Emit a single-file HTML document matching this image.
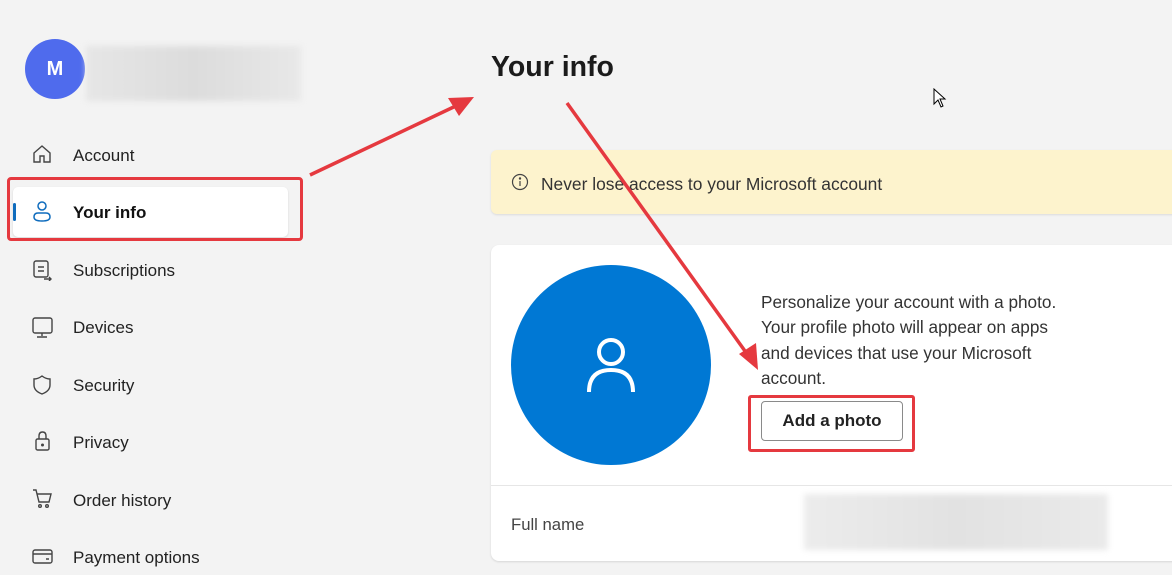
<!DOCTYPE html>
<html><head><style>
body{margin:0;width:1172px;height:575px;background:#f3f3f3;font-family:"Liberation Sans",sans-serif;color:#1b1b1b;position:relative;overflow:hidden}
.abs{position:absolute}
.nav{position:absolute;left:73px;font-size:17px;color:#222}
.ic{position:absolute;left:31px}
</style></head><body>
<div class="abs" style="left:25px;top:39px;width:60px;height:60px;border-radius:50%;background:#4f6bed;color:#fff;font-size:20px;font-weight:bold;text-align:center;line-height:60px">M</div>
<div class="abs" style="left:86px;top:46px;width:215px;height:55px;background:linear-gradient(90deg,#e6e6e6,#dcdcdc 50%,#e8e8e8);filter:blur(3px)"></div>

<div class="abs" style="left:13px;top:187px;width:275px;height:50px;background:#fff;border-radius:5px;box-shadow:0 1px 2px rgba(0,0,0,.12)"></div>
<div class="abs" style="left:13px;top:203px;width:3px;height:18px;background:#0f6cbd;border-radius:2px"></div>
<div class="abs" style="left:7px;top:177px;width:290px;height:58px;border:3px solid #e5393f;border-radius:4px"></div>

<svg class="ic" style="top:143px" width="22" height="22" viewBox="0 0 22 22" fill="none" stroke="#444" stroke-width="1.4"><path d="M3 10 L11 3 L19 10 V19 H13 V13 H9 V19 H3 Z"/></svg>
<div class="nav" style="top:146px">Account</div>
<svg class="ic" style="top:199px" width="22" height="24" viewBox="0 0 22 24" fill="none" stroke="#0f6cbd" stroke-width="1.5"><circle cx="11" cy="7" r="4"/><path d="M3 18 Q3 14 7 14 H15 Q19 14 19 18 Q19 22 11 22 Q3 22 3 18Z"/></svg>
<div class="nav" style="top:203px;font-weight:bold;color:#111">Your info</div>
<svg class="ic" style="top:259px" width="22" height="22" viewBox="0 0 22 22" fill="none" stroke="#444" stroke-width="1.4"><rect x="3" y="2" width="14" height="16" rx="2"/><path d="M7 8H13M7 12H13M13 20H20M18 18L20 20L18 22"/></svg>
<div class="nav" style="top:261px">Subscriptions</div>
<svg class="ic" style="top:316px" width="22" height="22" viewBox="0 0 22 22" fill="none" stroke="#444" stroke-width="1.4"><rect x="2" y="2" width="19" height="15" rx="2"/><path d="M11 17V20M6 21H16"/></svg>
<div class="nav" style="top:318px">Devices</div>
<svg class="ic" style="top:374px" width="22" height="22" viewBox="0 0 22 22" fill="none" stroke="#444" stroke-width="1.4"><path d="M11 2 Q15 5 19 5 V11 Q19 17 11 20 Q3 17 3 11 V5 Q7 5 11 2Z"/></svg>
<div class="nav" style="top:376px">Security</div>
<svg class="ic" style="top:430px" width="22" height="22" viewBox="0 0 22 22" fill="none" stroke="#444" stroke-width="1.4"><rect x="5" y="9" width="13" height="11" rx="1.5"/><path d="M8 9V6Q8 2 11.5 2Q15 2 15 6V9"/><circle cx="11.5" cy="15" r=".8" fill="#444"/></svg>
<div class="nav" style="top:433px">Privacy</div>
<svg class="ic" style="top:488px" width="22" height="22" viewBox="0 0 22 22" fill="none" stroke="#444" stroke-width="1.4"><path d="M2 2H5L8 14H18L20 6H6"/><circle cx="9" cy="18" r="1.3"/><circle cx="16" cy="18" r="1.3"/></svg>
<div class="nav" style="top:491px">Order history</div>
<svg class="ic" style="top:546px" width="22" height="22" viewBox="0 0 22 22" fill="none" stroke="#444" stroke-width="1.4"><rect x="2" y="4" width="19" height="13" rx="2"/><path d="M2 8H21M15 13H18"/></svg>
<div class="nav" style="top:548px">Payment options</div>

<div class="abs" style="left:491px;top:51px;font-size:28.5px;font-weight:bold;color:#1b1b1b">Your info</div>
<svg class="abs" style="left:933px;top:88px" width="14" height="20" viewBox="0 0 14 20"><path d="M1 1V16L5 12L8 19L10 18L7 11H12Z" fill="#fff" stroke="#000" stroke-width="1"/></svg>

<div class="abs" style="left:491px;top:150px;width:700px;height:64px;background:#fdf3cd;border-radius:6px;box-shadow:0 1px 2px rgba(0,0,0,.1)"></div>
<svg class="abs" style="left:511px;top:173px" width="18" height="18" viewBox="0 0 18 18" fill="none" stroke="#444" stroke-width="1.2"><circle cx="9" cy="9" r="7.5"/><path d="M9 8V13"/><circle cx="9" cy="5.5" r=".6" fill="#444"/></svg>
<div class="abs" style="left:541px;top:174px;font-size:17.4px;color:#333">Never lose access to your Microsoft account</div>

<div class="abs" style="left:491px;top:245px;width:700px;height:316px;background:#fff;border-radius:8px;box-shadow:0 1px 2px rgba(0,0,0,.12)"></div>
<div class="abs" style="left:491px;top:485px;width:700px;height:1px;background:#e6e6e6"></div>
<div class="abs" style="left:511px;top:265px;width:200px;height:200px;border-radius:50%;background:#0078d4"></div>
<svg class="abs" style="left:585px;top:337px" width="52" height="56" viewBox="0 0 52 56" fill="none" stroke="#fff" stroke-width="4"><circle cx="26" cy="15" r="12"/><path d="M4 55 Q4 33 26 33 Q48 33 48 55"/></svg>
<div class="abs" style="left:761px;top:290px;font-size:17.2px;line-height:25.3px;color:#333;width:340px">Personalize your account with a photo.<br>Your profile photo will appear on apps<br>and devices that use your Microsoft<br>account.</div>
<div class="abs" style="left:761px;top:401px;width:140px;height:38px;border:1px solid #8a8a8a;border-radius:4px;background:#fff;font-size:17px;font-weight:bold;text-align:center;line-height:38px;color:#222">Add a photo</div>
<div class="abs" style="left:748px;top:395px;width:161px;height:51px;border:3px solid #e5393f;border-radius:3px"></div>
<div class="abs" style="left:511px;top:515px;font-size:16.7px;color:#444">Full name</div>
<div class="abs" style="left:804px;top:494px;width:304px;height:56px;background:linear-gradient(90deg,#ececec,#e2e2e2 50%,#eaeaea);filter:blur(3px)"></div>

<svg class="abs" style="left:0;top:0" width="1172" height="575">
<g stroke="#e5393f" stroke-width="3.5" fill="#e5393f">
<line x1="310" y1="175" x2="460" y2="104"/>
<polygon points="474,97 448,98 459,116" stroke="none"/>
<line x1="567" y1="103" x2="750" y2="358"/>
<polygon points="758,370 739,354 756,343" stroke="none"/>
</g></svg>
</body></html>
